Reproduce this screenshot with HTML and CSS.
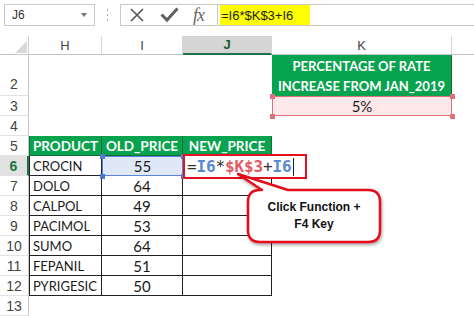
FILE: index.html
```html
<!DOCTYPE html>
<html>
<head>
<meta charset="utf-8">
<link rel="stylesheet" href="styles.css">
</head>
<body>
<div class="topbar">
  <div class="namebox"><span>J6</span><span class="dd"></span></div>
  <div class="dots"><i></i><i></i><i></i></div>
  <div class="iconbox">
    <svg class="ic-x" width="16" height="16" viewBox="0 0 16 16"><path d="M2 2 L14 14 M14 2 L2 14" stroke="#555" stroke-width="1.6" fill="none"/></svg>
    <svg class="ic-ok" width="20" height="16" viewBox="0 0 20 16"><path d="M1.5 7.5 L7 13 L17.5 1.5" stroke="#606060" stroke-width="3" fill="none"/></svg>
    <span class="fx">fx</span>
  </div>
  <div class="fbar"><span class="fhl">=I6*$K$3+I6</span></div>
</div>

<div class="sheet">
  <!-- header row -->
  <div class="corner"><svg width="29" height="19" viewBox="0 0 29 19"><path d="M15 17 L27 17 L27 5 Z" fill="#d8d8d8"/></svg></div>
  <div class="ch">H</div>
  <div class="ch">I</div>
  <div class="ch ch-act">J</div>
  <div class="ch">K</div>
  <div class="ch ch-end"></div>

  <!-- row 2 -->
  <div class="rh rh-tall">2</div>
  <div class="c"></div><div class="c"></div><div class="c"></div>
  <div class="c k-head">PERCENTAGE OF RATE<br>INCREASE FROM JAN_2019</div>
  <div class="c"></div>

  <!-- row 3 -->
  <div class="rh">3</div>
  <div class="c"></div><div class="c"></div><div class="c"></div>
  <div class="c k-rate">5%</div>
  <div class="c"></div>

  <!-- row 4 -->
  <div class="rh">4</div>
  <div class="c"></div><div class="c"></div><div class="c"></div><div class="c"></div><div class="c"></div>

  <!-- row 5 -->
  <div class="rh">5</div>
  <div class="c g first">PRODUCT</div>
  <div class="c g">OLD_PRICE</div>
  <div class="c g">NEW_PRICE</div>
  <div class="c"></div><div class="c"></div>

  <!-- row 6 -->
  <div class="rh rh-act">6</div>
  <div class="c b first">CROCIN</div>
  <div class="c b num ref-blue">55</div>
  <div class="c b"></div>
  <div class="c"></div><div class="c"></div>

  <div class="rh">7</div>
  <div class="c b first">DOLO</div><div class="c b num">64</div><div class="c b"></div>
  <div class="c"></div><div class="c"></div>

  <div class="rh">8</div>
  <div class="c b first">CALPOL</div><div class="c b num">49</div><div class="c b"></div>
  <div class="c"></div><div class="c"></div>

  <div class="rh">9</div>
  <div class="c b first">PACIMOL</div><div class="c b num">53</div><div class="c b"></div>
  <div class="c"></div><div class="c"></div>

  <div class="rh">10</div>
  <div class="c b first">SUMO</div><div class="c b num">64</div><div class="c b"></div>
  <div class="c"></div><div class="c"></div>

  <div class="rh">11</div>
  <div class="c b first">FEPANIL</div><div class="c b num">51</div><div class="c b"></div>
  <div class="c"></div><div class="c"></div>

  <div class="rh">12</div>
  <div class="c b first">PYRIGESIC</div><div class="c b num">50</div><div class="c b"></div>
  <div class="c"></div><div class="c"></div>

  <div class="rh">13</div>
  <div class="c"></div><div class="c"></div><div class="c"></div><div class="c"></div><div class="c"></div>

  <!-- overlays -->
  <span class="hnd hb" style="left:100px;top:118px"></span>
  <span class="hnd hb" style="left:181px;top:118px"></span>
  <span class="hnd hb" style="left:100px;top:138px"></span>
  <span class="hnd hb" style="left:181px;top:138px"></span>
  <span class="hnd hr" style="left:270px;top:58px"></span>
  <span class="hnd hr" style="left:450px;top:58px"></span>
  <span class="hnd hr" style="left:270px;top:78px"></span>
  <span class="hnd hr" style="left:450px;top:78px"></span>

  <div class="editbox"><span class="fc op">=</span><span class="fc rb">I</span><span class="fc rb">6</span><span class="fc op">*</span><span class="fc rr">$</span><span class="fc rr">K</span><span class="fc rr">$</span><span class="fc rr">3</span><span class="fc op">+</span><span class="fc rb">I</span><span class="fc rb">6</span><span class="caret"></span></div>

  <svg class="callout" width="160" height="92" viewBox="0 0 160 92">
    <defs>
      <filter id="sh" x="-20%" y="-20%" width="140%" height="150%">
        <feDropShadow dx="1" dy="2" stdDeviation="1.5" flood-color="#000" flood-opacity="0.35"/>
      </filter>
    </defs>
    <path d="M32 25 L8 9 L58 25 H138 Q150 25 150 37 V65 Q150 77 138 77 H30 Q18 77 18 65 V37 Q18 25 30 25 Z" fill="#fff" stroke="#e3101e" stroke-width="2.5" stroke-linejoin="round" filter="url(#sh)"/>
  </svg>
  <div class="callout-text">Click Function +<br>F4 Key</div>
</div>
</body>
</html>
```
FILE: styles.css
```css
* { box-sizing: border-box; }
html, body { margin: 0; padding: 0; background: #fff; }
body {
  width: 474px; height: 316px; overflow: hidden;
  font-family: "Liberation Sans", Arial, sans-serif;
  color: #222;
}

/* ---------- formula bar ---------- */
.topbar {
  height: 36px;
  display: flex;
  align-items: flex-start;
  padding-top: 4px;
}
.namebox {
  margin-left: 4px;
  width: 91px; height: 22px;
  border: 1px solid #c9c9c9;
  display: flex; align-items: center; justify-content: space-between;
  padding: 0 7px 0 7px;
  font-size: 12px; color: #333;
}
.dd {
  width: 0; height: 0;
  border-left: 3.5px solid transparent;
  border-right: 3.5px solid transparent;
  border-top: 4px solid #777;
}
.dots {
  width: 25px; height: 22px;
  display: flex; flex-direction: column; align-items: center; justify-content: center; gap: 3px;
}
.dots i { display: block; width: 1px; height: 2px; background: #aaa; }
.iconbox {
  width: 98px; height: 22px;
  border: 1px solid #c9c9c9;
  display: flex; align-items: center;
  padding-left: 8px;
}
.ic-x { margin-right: 15px; }
.ic-ok { margin-right: 13px; }
.fx {
  font-family: "Liberation Serif", "Times New Roman", serif;
  font-style: italic; font-size: 18px; color: #666; line-height: 1;
  letter-spacing: -1px;
}
.fbar {
  flex: 1; height: 22px;
  border-top: 1px solid #c9c9c9; border-bottom: 1px solid #c9c9c9;
  padding: 0 0 0 2px;
  display: flex; align-items: center;
}
.fhl {
  background: #ffff00;
  height: 20px; width: 90px;
  display: flex; align-items: center;
  padding-left: 1px;
  font-size: 13px; color: #222;
}

/* ---------- sheet ---------- */
.sheet {
  position: relative;
  display: grid;
  grid-template-columns: 29px 73px 81px 89px 180px 22px;
  grid-template-rows: 19px 41px repeat(11, 20px);
}
.corner { border-right: 1px solid #d0d0d0; border-bottom: 1px solid #c4c4c4; }
.corner svg { display: block; }
.ch {
  border-right: 1px solid #d6d6d6;
  border-bottom: 1px solid #c4c4c4;
  display: flex; align-items: center; justify-content: center;
  font-size: 13px; color: #444;
}
.ch-end { border-right: none; }
.ch-act {
  background: #d5d5d5;
  border-bottom: 2px solid #217346;
  color: #1b5a33; font-weight: bold;
}
.rh {
  border-right: 1px solid #c9c9c9;
  border-bottom: 1px solid #e2e2e2;
  display: flex; align-items: center; justify-content: center;
  font-size: 14px; color: #444;
}
.rh-tall { align-items: flex-end; padding-bottom: 3px; }
.rh-act {
  background: #e1e1e1;
  border-right: 2px solid #217346;
  color: #217346; font-weight: bold;
}

.c {
  display: flex; align-items: center;
  font-family: Lato, "Liberation Sans", Arial, sans-serif;
  font-size: 13px; color: #1a1a1a;
  padding: 0 3px;
  white-space: nowrap;
}
.g {
  background: #07a34e;
  color: #fff; font-weight: bold; font-size: 13.5px;
  justify-content: center;
  border-right: 1px solid #176b37;
  border-bottom: 1px solid #176b37;
}
.b {
  border-right: 1px solid #222;
  border-bottom: 1px solid #222;
}
.first { border-left: 1px solid #222; }
.g.first { border-left: 1px solid #176b37; }
.num { justify-content: center; font-size: 15px; }

.k-head {
  background: #07a34e;
  color: #fff; font-weight: bold; font-size: 13px;
  justify-content: center; text-align: center;
  line-height: 20px;
  border-right: 1px solid #176b37;
}
.k-rate {
  background: #fde8e9;
  border: 1px solid #e0707c;
  justify-content: center;
  font-size: 15px;
}
.ref-blue {
  background: #dfe8f6;
  border: 1px solid #5b85d6;
}

/* overlays */
.hnd {
  position: absolute; width: 5px; height: 5px;
}
.hb { background: #4f7ad0; }
.hr { background: #e0707c; }

.editbox {
  position: absolute;
  left: 183px; top: 118px;
  width: 124px; height: 25px;
  border: 2.5px solid #e3101e;
  display: flex; align-items: center;
  padding-left: 2px;
  font-family: "DejaVu Sans Mono", "Liberation Mono", sans-serif;
  font-weight: bold; font-size: 16px;
  background: #fff;
}
.fc { display: inline-block; width: 9.5px; text-align: center; }
.op { color: #333; font-weight: normal; }
.rb { color: #5a86d6; }
.rr { color: #e45a62; }
.caret { display: inline-block; width: 1px; height: 18px; background: #222; margin-left: 1px; }

.callout {
  position: absolute; left: 230px; top: 129px;
}
.callout-text {
  position: absolute;
  left: 248px; top: 163px; width: 132px;
  text-align: center;
  font-family: "Liberation Sans", Arial, sans-serif;
  font-weight: bold; font-size: 12px; line-height: 17px;
  color: #111;
}
```
